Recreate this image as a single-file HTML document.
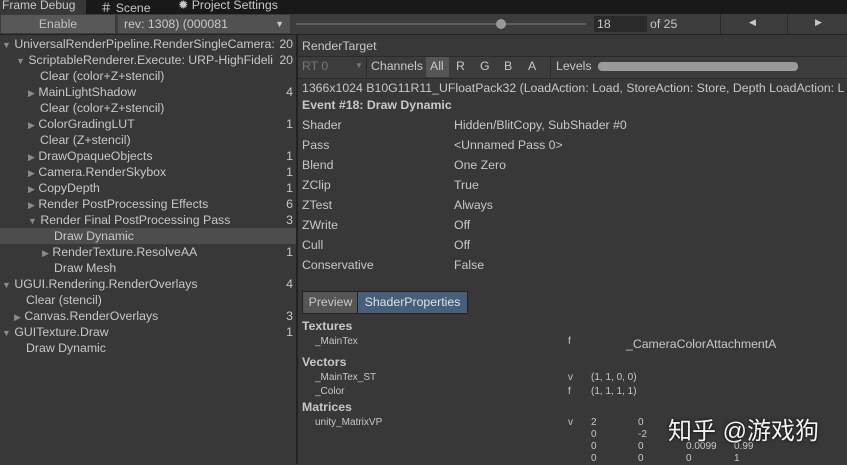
<!DOCTYPE html>
<html><head><style>
body{margin:0;width:847px;height:464px;background:#383838;font-family:"Liberation Sans",sans-serif;font-size:12.3px;color:#c8c8c8;position:relative;overflow:hidden}
.a{position:absolute;white-space:nowrap}
.r{position:absolute;height:16px;line-height:16px;white-space:nowrap}
.tri{color:#8a8a8a;font-size:9px}
.n{position:absolute;left:0;width:293px;text-align:right;height:16px;line-height:16px}
.b{font-weight:bold}
</style></head><body>
<div class="a" style="left:0;top:0;width:847px;height:14px;background:#191919"></div>
<div class="a" style="left:0;top:0;width:86px;height:14px;background:#383838"></div>
<div class="a" style="left:2px;top:-2px;font-size:12px">Frame Debug</div>
<div class="a" style="left:100px;top:-2px">＃ Scene</div>
<div class="a" style="left:178px;top:-2px">✹ Project Settings</div>
<div class="a" style="left:0;top:14px;width:847px;height:20px;background:#3c3c3c;border-bottom:1px solid #222"></div>
<div class="a" style="left:1px;top:15px;width:114px;height:18px;background:#585858;text-align:center;line-height:18px;color:#c0c0c0">Enable</div>
<div class="a" style="left:118px;top:15px;width:172px;height:18px;background:#515151;line-height:18px;padding-left:6px;box-sizing:border-box">rev: 1308) (000081<span style="position:absolute;right:6px;font-size:9px">▼</span></div>
<div class="a" style="left:296px;top:23px;width:290px;height:2px;background:#5e5e5e"></div>
<div class="a" style="left:496px;top:19px;width:10px;height:10px;border-radius:5px;background:#999"></div>
<div class="a" style="left:594px;top:16px;width:50px;height:16px;background:#2a2a2a;line-height:16px;padding-left:3px">18</div>
<div class="a" style="left:650px;top:17px">of 25</div>
<div class="a" style="left:720px;top:14px;width:1px;height:20px;background:#2a2a2a"></div>
<div class="a" style="left:787px;top:14px;width:1px;height:20px;background:#2a2a2a"></div>
<div class="a" style="left:749px;top:17px;font-size:9px">◀</div>
<div class="a" style="left:815px;top:17px;font-size:9px">▶</div>
<div class="a" style="left:296px;top:35px;width:2px;height:429px;background:#222"></div>
<div class="a" style="left:0;top:228px;width:296px;height:16px;background:#4d4d4d"></div>
<div class="r" style="left:2px;top:36px"><span class="tri">▼</span> UniversalRenderPipeline.RenderSingleCamera:</div>
<div class="r" style="left:16px;top:52px"><span class="tri">▼</span> ScriptableRenderer.Execute: URP-HighFideli</div>
<div class="r" style="left:40px;top:68px">Clear (color+Z+stencil)</div>
<div class="r" style="left:28px;top:84px"><span class="tri">▶</span> MainLightShadow</div>
<div class="r" style="left:40px;top:100px">Clear (color+Z+stencil)</div>
<div class="r" style="left:28px;top:116px"><span class="tri">▶</span> ColorGradingLUT</div>
<div class="r" style="left:40px;top:132px">Clear (Z+stencil)</div>
<div class="r" style="left:28px;top:148px"><span class="tri">▶</span> DrawOpaqueObjects</div>
<div class="r" style="left:28px;top:164px"><span class="tri">▶</span> Camera.RenderSkybox</div>
<div class="r" style="left:28px;top:180px"><span class="tri">▶</span> CopyDepth</div>
<div class="r" style="left:28px;top:196px"><span class="tri">▶</span> Render PostProcessing Effects</div>
<div class="r" style="left:28px;top:212px"><span class="tri">▼</span> Render Final PostProcessing Pass</div>
<div class="r" style="left:54px;top:228px">Draw Dynamic</div>
<div class="r" style="left:42px;top:244px"><span class="tri">▶</span> RenderTexture.ResolveAA</div>
<div class="r" style="left:54px;top:260px">Draw Mesh</div>
<div class="r" style="left:2px;top:276px"><span class="tri">▼</span> UGUI.Rendering.RenderOverlays</div>
<div class="r" style="left:26px;top:292px">Clear (stencil)</div>
<div class="r" style="left:14px;top:308px"><span class="tri">▶</span> Canvas.RenderOverlays</div>
<div class="r" style="left:2px;top:324px"><span class="tri">▼</span> GUITexture.Draw</div>
<div class="r" style="left:26px;top:340px">Draw Dynamic</div>
<div class="n" style="top:36px">20</div><div class="n" style="top:52px">20</div>
<div class="n" style="top:84px">4</div><div class="n" style="top:116px">1</div>
<div class="n" style="top:148px">1</div><div class="n" style="top:164px">1</div>
<div class="n" style="top:180px">1</div><div class="n" style="top:196px">6</div>
<div class="n" style="top:212px">3</div><div class="n" style="top:244px">1</div>
<div class="n" style="top:276px">4</div><div class="n" style="top:308px">3</div>
<div class="n" style="top:324px">1</div>
<div class="a" style="left:302px;top:39px">RenderTarget</div>
<div class="a" style="left:298px;top:56px;width:549px;height:21px;background:#3c3c3c;border-top:1px solid #2a2a2a;border-bottom:1px solid #2a2a2a"></div>
<div class="a" style="left:302px;top:59px;color:#777">RT 0</div>
<div class="a" style="left:355px;top:61px;font-size:8px;color:#777">▼</div>
<div class="a" style="left:366px;top:57px;width:1px;height:20px;background:#2a2a2a"></div>
<div class="a" style="left:371px;top:59px">Channels</div>
<div class="a" style="left:426px;top:57px;width:23px;height:20px;background:#555"></div>
<div class="a" style="left:430px;top:59px">All</div>
<div class="a" style="left:456px;top:59px">R</div>
<div class="a" style="left:480px;top:59px">G</div>
<div class="a" style="left:504px;top:59px">B</div>
<div class="a" style="left:528px;top:59px">A</div>
<div class="a" style="left:550px;top:57px;width:1px;height:20px;background:#2a2a2a"></div>
<div class="a" style="left:556px;top:59px">Levels</div>
<div class="a" style="left:598px;top:62px;width:200px;height:9px;border-radius:4px;background:#9a9a9a"></div>
<div class="a" style="left:302px;top:81px">1366x1024 B10G11R11_UFloatPack32 (LoadAction: Load, StoreAction: Store, Depth LoadAction: L</div>
<div class="a b" style="left:302px;top:98px">Event #18: Draw Dynamic</div>
<div class="a" style="left:302px;top:115px;line-height:20px">Shader<br>Pass<br>Blend<br>ZClip<br>ZTest<br>ZWrite<br>Cull<br>Conservative</div>
<div class="a" style="left:454px;top:115px;line-height:20px">Hidden/BlitCopy, SubShader #0<br>&lt;Unnamed Pass 0&gt;<br>One Zero<br>True<br>Always<br>Off<br>Off<br>False</div>
<div class="a" style="left:302px;top:291px;width:55px;height:21px;background:#555;border:1px solid #222;line-height:21px;text-align:center">Preview</div>
<div class="a" style="left:357px;top:291px;width:109px;height:21px;background:#46607c;border:1px solid #222;line-height:21px;text-align:center;color:#e0e0e0">ShaderProperties</div>
<div class="a b" style="left:302px;top:319px">Textures</div>
<div class="a" style="left:315px;top:336px;font-size:10px">_MainTex</div>
<div class="a" style="left:568px;top:336px;font-size:10px">f</div>
<div class="a" style="left:626px;top:337px">_CameraColorAttachmentA</div>
<div class="a b" style="left:302px;top:355px">Vectors</div>
<div class="a" style="left:315px;top:372px;font-size:10px">_MainTex_ST</div>
<div class="a" style="left:568px;top:372px;font-size:10px">v</div>
<div class="a" style="left:591px;top:372px;font-size:10px">(1, 1, 0, 0)</div>
<div class="a" style="left:315px;top:386px;font-size:10px">_Color</div>
<div class="a" style="left:568px;top:386px;font-size:10px">f</div>
<div class="a" style="left:591px;top:386px;font-size:10px">(1, 1, 1, 1)</div>
<div class="a b" style="left:302px;top:400px">Matrices</div>
<div class="a" style="left:315px;top:417px;font-size:10px">unity_MatrixVP</div>
<div class="a" style="left:568px;top:417px;font-size:10px">v</div>
<div class="a" style="left:591px;top:417px;font-size:10px;line-height:12px">2<br>0<br>0<br>0</div>
<div class="a" style="left:638px;top:417px;font-size:10px;line-height:12px">0<br>-2<br>0<br>0</div>
<div class="a" style="left:686px;top:441px;font-size:10px;line-height:12px">0.0099<br>0</div>
<div class="a" style="left:734px;top:441px;font-size:10px;line-height:12px">0.99<br>1</div>
<div class="a" style="left:668px;top:411px;font-size:24px;color:#f2f2f2;font-family:'Liberation Sans','Noto Sans CJK SC',sans-serif;text-shadow:0 0 3px #000">知乎 @游戏狗</div>
</body></html>
